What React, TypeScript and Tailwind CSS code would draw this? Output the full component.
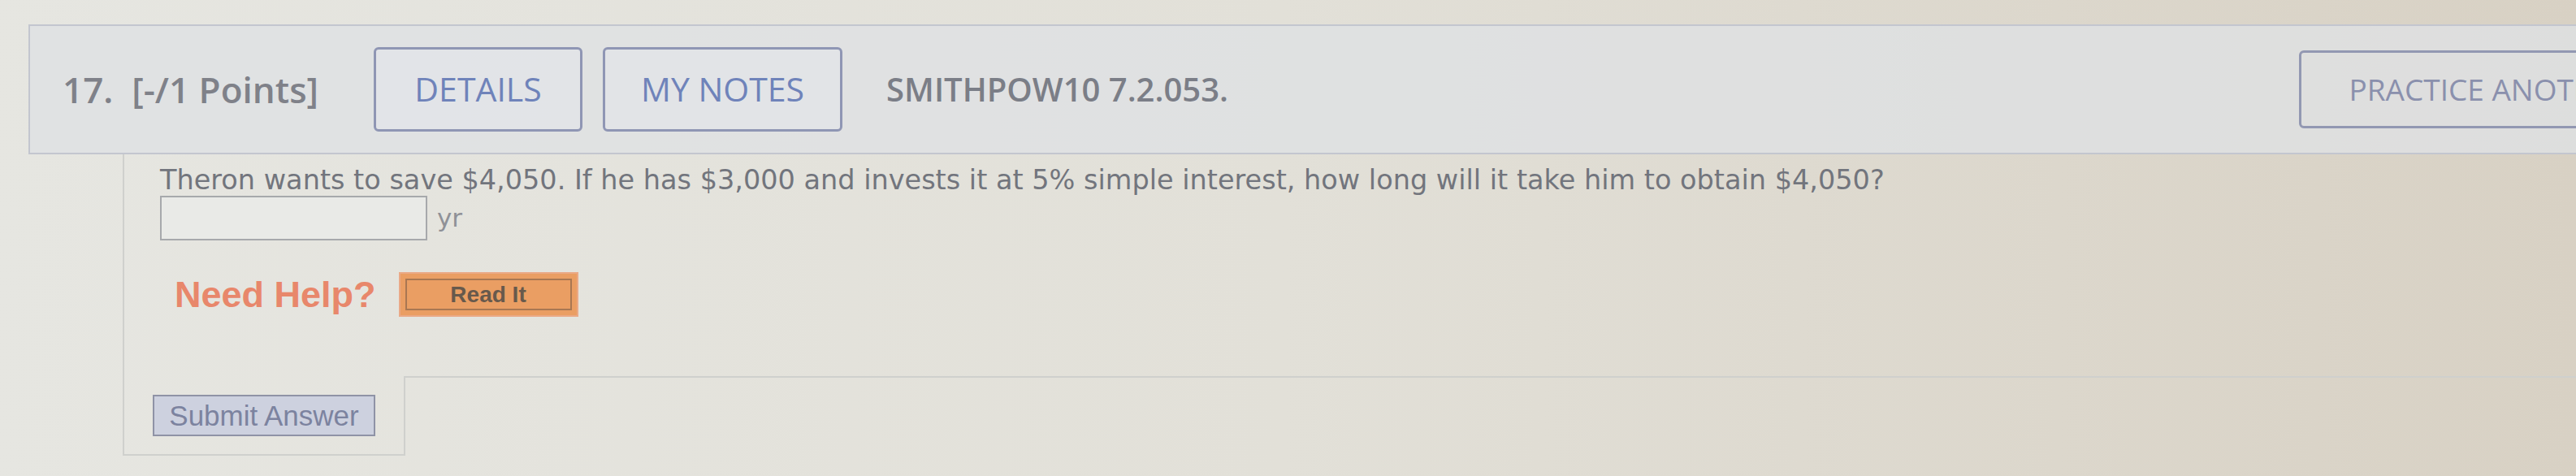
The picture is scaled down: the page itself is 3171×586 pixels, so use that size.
export default function App() {
  return (
    <div className="w-[3171px] h-[586px] overflow-hidden bg-gradient-to-r from-[#e6e6e1] via-[#e2e0d8] to-[#d8d1c4] font-['Open_Sans',sans-serif]">
      {/* Question header */}
      <div className="pt-[30px] pl-[35px]">
        <div className="flex items-center h-[160px] w-[3300px] border-y-2 border-l-2 border-[#c3c6cf] bg-[#dfe1e4]/80 pl-[40px] pr-[35px]">
          <span className="text-[44px] font-semibold text-[#7f8189] whitespace-pre">17.  [-/1 Points]</span>
          <button className="ml-[68px] w-[257px] h-[104px] rounded-[6px] border-[3px] border-[#8f96b4] bg-[#e3e5e9]/70 text-[41px] font-medium text-[#6f83ba]">
            DETAILS
          </button>
          <button className="ml-[25px] w-[295px] h-[104px] rounded-[6px] border-[3px] border-[#8f96b4] bg-[#e3e5e9]/70 text-[41px] font-medium text-[#6f83ba]">
            MY NOTES
          </button>
          <span className="ml-[54px] text-[40px] font-semibold text-[#7b7e87]">SMITHPOW10 7.2.053.</span>
          <button className="ml-auto w-[470px] h-[96px] rounded-[6px] border-[3px] border-[#9298b2] text-[37px] font-medium text-[#8a90ad] whitespace-nowrap">
            PRACTICE ANOTHER
          </button>
        </div>

        {/* Question body */}
        <div className="ml-[116px] w-[3100px] border-l-2 border-[#cfd0cd]">
          <div className="pl-[44px] pt-[14px]">
            <p className="font-['DejaVu_Sans',sans-serif] text-[33.5px] leading-[36px] text-[#72757d]">
              Theron wants to save $4,050. If he has $3,000 and invests it at 5% simple interest, how long will it take him to obtain $4,050?
            </p>
            <div className="mt-[1px] flex items-center gap-[12px]">
              <div className="w-[329px] h-[55px] border-2 border-[#a7a9ac] bg-[#e9eae7]" />
              <span className="font-['DejaVu_Sans',sans-serif] text-[31px] text-[#8f9197]">yr</span>
            </div>
            <div className="mt-[33px] flex items-center pl-[18px] gap-[28px]">
              <span className="font-['Liberation_Sans',sans-serif] font-bold text-[45px] text-[#e8876b]">Need Help?</span>
              <button className="w-[221px] h-[55px] border-2 border-[#eaa986] bg-[#ea9e63] p-[6px]">
                <span className="flex h-full items-center justify-center border-2 border-[#a97752] font-['Liberation_Sans',sans-serif] font-bold text-[28px] text-[#67594c]">
                  Read It
                </span>
              </button>
            </div>
          </div>

          <div className="mt-[66px] flex h-[98px]">
            <div className="w-[344px] border-b-2 border-[#cfd0cd] pl-[35px] pt-[23px]">
              <button className="w-[274px] h-[51px] border-2 border-[#8f93a6] bg-[#cdd1df] font-['Liberation_Sans',sans-serif] text-[35px] leading-none text-[#7c839f]">
                Submit Answer
              </button>
            </div>
            <div className="flex-1 border-t-2 border-l-2 border-[#cfd0cd]" />
          </div>
        </div>
      </div>
    </div>
  );
}
